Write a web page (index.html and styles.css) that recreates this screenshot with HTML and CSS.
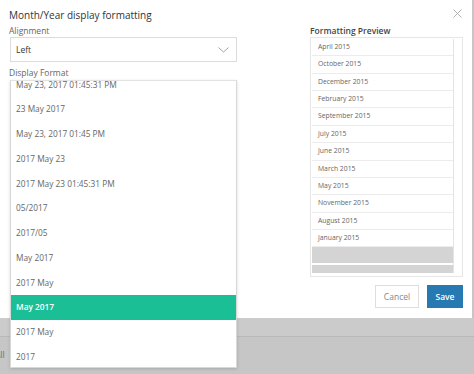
FILE: index.html
```html
<!DOCTYPE html>
<html lang="en">
<head>
    <meta charset="UTF-8">
    <title>Month/Year display formatting</title>
    <link rel="stylesheet" href="styles.css">
</head>
<body>
    <div class="modal">
        <div class="modal-header">
            <h2>Month/Year display formatting</h2>
            <button class="close-btn" aria-label="Close">
                <svg width="9" height="9" viewBox="0 0 9 9"><path d="M0.5 0.5L8.5 8.5M8.5 0.5L0.5 8.5" stroke="#a8a8a8" stroke-width="0.9" fill="none"/></svg>
            </button>
        </div>
        <div class="modal-body">
            <div class="left-col">
                <label class="field-label label-first">Alignment</label>
                <div class="select">
                    <span>Left</span>
                    <svg width="11" height="6" viewBox="0 0 11 6"><path d="M0.5 0.5L5.5 5L10.5 0.5" stroke="#9a9a9a" stroke-width="0.9" fill="none"/></svg>
                </div>
                <label class="field-label label-format">Display Format</label>
                <div class="listbox">
                    <ul class="options">
                        <li>May 23, 2017 01:45:31 PM</li>
                        <li>23 May 2017</li>
                        <li>May 23, 2017 01:45 PM</li>
                        <li>2017 May 23</li>
                        <li>2017 May 23 01:45:31 PM</li>
                        <li>05/2017</li>
                        <li>2017/05</li>
                        <li>May 2017</li>
                        <li>2017 May</li>
                        <li class="selected">May 2017</li>
                        <li>2017 May</li>
                        <li>2017</li>
                    </ul>
                </div>
            </div>
            <div class="right-col">
                <label class="field-label label-first preview-label">Formatting Preview</label>
                <div class="preview-box">
                    <ul class="preview-list">
                        <li>April 2015</li>
                        <li>October 2015</li>
                        <li>December 2015</li>
                        <li>February 2015</li>
                        <li>September 2015</li>
                        <li>July 2015</li>
                        <li>June 2015</li>
                        <li>March 2015</li>
                        <li>May 2015</li>
                        <li>November 2015</li>
                        <li>August 2015</li>
                        <li>January 2015</li>
                        <li class="empty"></li>
                        <li class="empty"></li>
                    </ul>
                    <div class="scroll-track"></div>
                </div>
                <div class="actions">
                    <button class="btn btn-cancel">Cancel</button>
                    <button class="btn btn-save">Save</button>
                </div>
            </div>
        </div>
    </div>
    <div class="backdrop">
        <div class="backdrop-bar"></div>
        <div class="backdrop-row">All</div>
    </div>
</body>
</html>
```

FILE: styles.css
```css
* {
    margin: 0;
    padding: 0;
    box-sizing: border-box;
    font-family: 'Open Sans', 'Noto Sans', sans-serif;
}

body {
    background: #c6c6c6;
    width: 474px;
    height: 374px;
    overflow: hidden;
}

.modal {
    position: relative;
    z-index: 1;
    width: 472px;
    height: 318px;
    background: white;
}

.modal-header {
    display: flex;
    justify-content: space-between;
    align-items: flex-start;
    padding: 8px 10px 0 9px;
    height: 22px;
}

.modal-header h2 {
    font-size: 10px;
    line-height: 14px;
    font-weight: 400;
    color: #333;
}

.close-btn {
    border: none;
    background: none;
    margin-top: 1px;
    width: 9px;
    height: 9px;
    display: flex;
}

.modal-body {
    display: flex;
    padding-left: 10px;
}

.left-col {
    width: 227px;
}

.right-col {
    width: 153px;
    margin-left: 73px;
}

.field-label {
    display: block;
    font-size: 8.5px;
    line-height: 12px;
    color: #666;
    margin-left: -1px;
}

.label-first {
    margin-top: 3px;
}

.label-format {
    margin-top: 5px;
}

.preview-label {
    margin-left: 0;
    font-weight: 600;
    color: #444;
}

.select {
    height: 25px;
    border: 1px solid #dcdcdc;
    display: flex;
    align-items: center;
    justify-content: space-between;
    padding: 0 7px 0 5px;
    font-size: 8.5px;
    color: #333;
}

.listbox {
    margin-top: 1px;
    height: 288px;
    border: 1px solid #d8d8d8;
    border-top-color: #e2e2e2;
    background: white;
    overflow: hidden;
    box-shadow: 0 1px 3px rgba(0, 0, 0, 0.15);
}

.options {
    list-style: none;
    margin-top: -8.4px;
}

.options li {
    height: 24.75px;
    line-height: 24.75px;
    padding-left: 5px;
    font-size: 8.3px;
    color: #666;
    white-space: nowrap;
}

.options li.selected {
    background: #1abf96;
    color: white;
    font-weight: 600;
}

.preview-box {
    height: 240px;
    border: 1px solid #e6e6e6;
    display: flex;
    padding: 1px 0 3px 1px;
}

.preview-list {
    list-style: none;
    flex: 1;
    overflow: hidden;
}

.preview-list li {
    height: 17.36px;
    line-height: 16.36px;
    padding-left: 6px;
    font-size: 6.8px;
    color: #666;
    border-bottom: 1px solid #ececec;
}

.preview-list li.empty {
    background: #d4d4d4;
    border-bottom: 2px solid white;
}

.scroll-track {
    width: 9px;
    border-left: 1px solid #e4e4e4;
}

.actions {
    display: flex;
    justify-content: flex-end;
    gap: 8px;
    margin-top: 8px;
}

.btn {
    height: 23px;
    font-size: 8.5px;
    cursor: pointer;
}

.btn-cancel {
    width: 44px;
    background: white;
    border: 1px solid #dedede;
    color: #888;
}

.btn-save {
    width: 36px;
    background: #2679b1;
    border: none;
    color: white;
    font-weight: 600;
}

.backdrop-bar {
    height: 19px;
    background: #cbcbcb;
    border-bottom: 1px solid #b9b9b9;
}

.backdrop-row {
    margin-left: -5px;
    padding-top: 12px;
    font-size: 8.5px;
    color: #6f6f6f;
}
```
